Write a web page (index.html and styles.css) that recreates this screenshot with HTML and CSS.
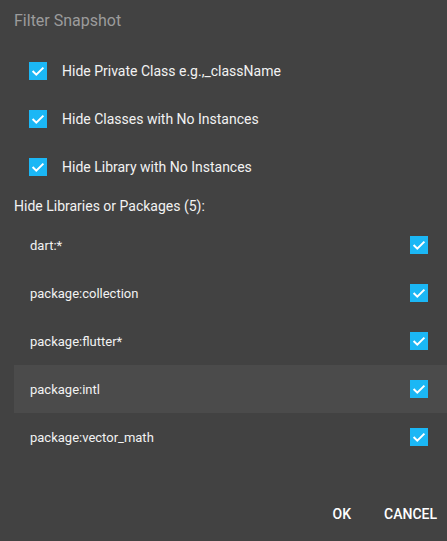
FILE: index.html
```html
<!DOCTYPE html>
<html>
<head>
<meta charset="utf-8">
<link rel="stylesheet" href="styles.css">
</head>
<body>
<div class="dialog">
  <div class="title">Filter Snapshot</div>
  <div class="options">
    <div class="opt"><span class="cb"><svg viewBox="0 0 18 18" width="18" height="18"><polyline points="3.6,9 7.3,12.7 14.4,5.6" /></svg></span><span class="opt-label">Hide Private Class e.g.,_className</span></div>
    <div class="opt"><span class="cb"><svg viewBox="0 0 18 18" width="18" height="18"><polyline points="3.6,9 7.3,12.7 14.4,5.6" /></svg></span><span class="opt-label">Hide Classes with No Instances</span></div>
    <div class="opt"><span class="cb"><svg viewBox="0 0 18 18" width="18" height="18"><polyline points="3.6,9 7.3,12.7 14.4,5.6" /></svg></span><span class="opt-label">Hide Library with No Instances</span></div>
  </div>
  <div class="section">Hide Libraries or Packages (5):</div>
  <div class="list">
    <div class="row"><span class="lib">dart:*</span><span class="cb"><svg viewBox="0 0 18 18" width="18" height="18"><polyline points="3.6,9 7.3,12.7 14.4,5.6" /></svg></span></div>
    <div class="row"><span class="lib">package:collection</span><span class="cb"><svg viewBox="0 0 18 18" width="18" height="18"><polyline points="3.6,9 7.3,12.7 14.4,5.6" /></svg></span></div>
    <div class="row"><span class="lib">package:flutter*</span><span class="cb"><svg viewBox="0 0 18 18" width="18" height="18"><polyline points="3.6,9 7.3,12.7 14.4,5.6" /></svg></span></div>
    <div class="row hover"><span class="lib">package:intl</span><span class="cb"><svg viewBox="0 0 18 18" width="18" height="18"><polyline points="3.6,9 7.3,12.7 14.4,5.6" /></svg></span></div>
    <div class="row"><span class="lib">package:vector_math</span><span class="cb"><svg viewBox="0 0 18 18" width="18" height="18"><polyline points="3.6,9 7.3,12.7 14.4,5.6" /></svg></span></div>
  </div>
  <div class="actions">
    <span class="btn">OK</span>
    <span class="btn">CANCEL</span>
  </div>
</div>
</body>
</html>
```
FILE: styles.css
```css
html, body {
  margin: 0;
  padding: 0;
  background: #424242;
}
body {
  width: 447px;
  height: 541px;
  overflow: hidden;
  font-family: Roboto, "Liberation Sans", sans-serif;
  color: #f2f2f2;
}
.dialog {
  padding: 11px 0 0 14px;
}
.title {
  font-size: 16px;
  line-height: 20px;
  height: 20px;
  color: #9c9c9c;
}
.options {
  margin-top: 16px;
  padding-left: 15px;
}
.opt {
  height: 48px;
  display: flex;
  align-items: center;
  gap: 15px;
  font-size: 14px;
}
.cb {
  width: 18px;
  height: 18px;
  background: #1bb7f5;
  display: inline-flex;
  flex: none;
}
.cb svg {
  display: block;
}
.cb polyline {
  fill: none;
  stroke: #ffffff;
  stroke-width: 2;
}
.section {
  margin-top: 5px;
  height: 20px;
  line-height: 20px;
  font-size: 14px;
}
.list {
  margin-top: 5px;
}
.row {
  height: 48px;
  display: flex;
  align-items: center;
  justify-content: space-between;
  padding: 0 19px 0 16px;
  font-size: 13px;
}
.row.hover {
  background: #4b4b4b;
}
.actions {
  margin-top: 41px;
  display: flex;
  justify-content: flex-end;
  gap: 33px;
  padding-right: 10px;
  height: 24px;
  align-items: center;
}
.btn {
  font-size: 14px;
  font-weight: 500;
  color: #ffffff;
}
```
